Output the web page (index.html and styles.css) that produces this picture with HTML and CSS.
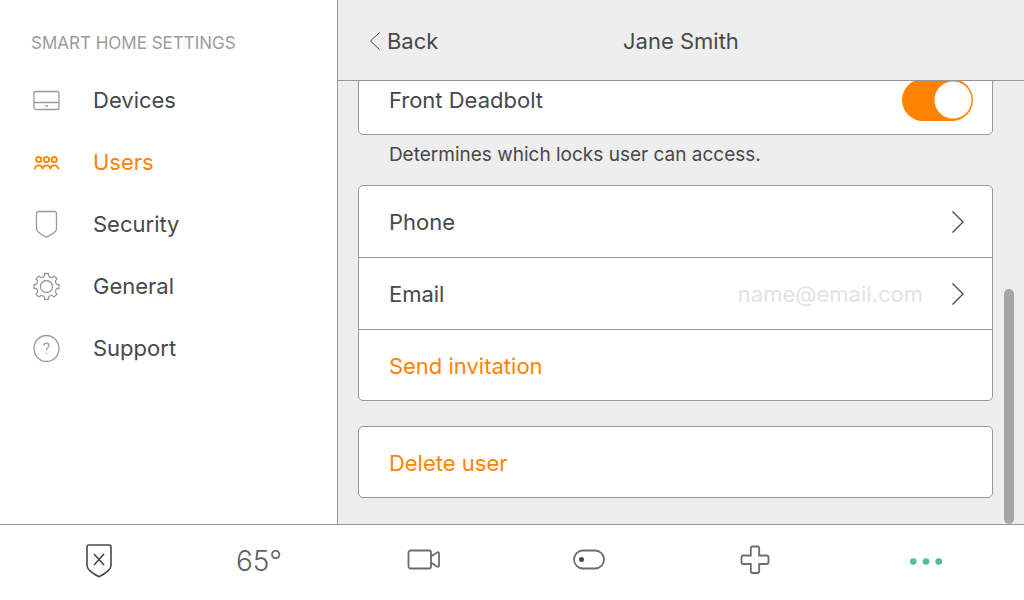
FILE: index.html
```html
<!DOCTYPE html>
<html lang="en">
<head>
<meta charset="utf-8">
<meta name="viewport" content="width=device-width, initial-scale=1">
<title>Smart Home Settings</title>
<link rel="stylesheet" href="styles.css">
</head>
<body>
<div class="app">
  <div class="main">
    <aside class="sidebar">
      <h2 class="sidebar-title">SMART HOME SETTINGS</h2>
      <nav class="menu">
        <a class="menu-item" href="#devices">
          <svg class="menu-icon" viewBox="0 0 28 28"><rect x="1" y="5.500" width="25" height="18" rx="2"/><path d="M1 16.500H26M12 20H15"/></svg>
          Devices
        </a>
        <a class="menu-item active" href="#users" aria-current="page">
          <svg class="menu-icon" viewBox="0 0 28 28"><circle cx="5.700" cy="11.500" r="2.600"/><circle cx="13.500" cy="11.500" r="2.600"/><circle cx="21.300" cy="11.500" r="2.600"/><path d="M1.500 21.300C2 18.500 3.500 17.300 5.700 17.300S9.100 18.500 9.600 21C10.100 18.500 11.400 17.300 13.500 17.300S16.900 18.500 17.400 21C17.900 18.500 19.200 17.300 21.300 17.300S25 18.500 25.500 21.300"/></svg>
          Users
        </a>
        <a class="menu-item" href="#security">
          <svg class="menu-icon" viewBox="0 0 28 28"><path d="M5.500 1.500H21.500Q23.500 1.500 23.500 3.500V18.500Q23.500 20.500 22 21.700Q18.500 25 13.500 27.200Q8.500 25 5 21.700Q3.500 20.500 3.500 18.500V3.500Q3.500 1.500 5.500 1.500Z"/></svg>
          Security
        </a>
        <a class="menu-item" href="#general">
          <svg class="menu-icon" viewBox="0.5 0 28 28"><circle cx="14" cy="14.500" r="6"/><path d="M12 1.500H16V3.500Q16 4.500 17.500 5.100Q19.300 5.900 20 5.300L21.600 4L24.500 6.900L23.200 8.500Q22.500 9.200 23.300 11Q23.900 12.500 25 12.500H26.500V16.500H25Q23.900 16.500 23.300 18Q22.500 19.800 23.200 20.500L24.500 22.100L21.600 25L20 23.700Q19.300 23.100 17.500 23.900Q16 24.500 16 25.500V27.500H12V25.500Q12 24.500 10.500 23.900Q8.700 23.100 8 23.700L6.400 25L3.500 22.100L4.800 20.500Q5.500 19.800 4.700 18Q4.100 16.500 3 16.500H1.500V12.500H3Q4.100 12.500 4.700 11Q5.500 9.200 4.800 8.500L3.500 6.900L6.400 4L8 5.300Q8.700 5.900 10.500 5.100Q12 4.500 12 3.500Z"/></svg>
          General
        </a>
        <a class="menu-item" href="#support">
          <svg class="menu-icon" viewBox="0 0 28 28"><ellipse cx="13.500" cy="14.500" rx="12.500" ry="13"/><path d="M11 11.500Q11 9.200 13.500 9.200T16 11.500Q16 12.800 14.700 13.700T13.500 16.200M13.500 18.700V20"/></svg>
          Support
        </a>
      </nav>
    </aside>
    <main class="pane">
      <header class="pane-header">
        <button class="back" type="button">
          <svg class="back-icon" viewBox="0 0 12 20"><path d="M10.500 1.500L1.500 10L10.500 18.500"/></svg>
          Back
        </button>
        <h1 class="pane-title">Jane Smith</h1>
      </header>
      <div class="pane-body">
        <section class="card">
          <label class="row toggle-row">
            <span class="row-label">Front Deadbolt</span>
            <input class="switch" type="checkbox" role="switch" checked>
          </label>
        </section>
        <p class="hint">Determines which locks user can access.</p>
        <section class="card">
          <button class="row" type="button">
            <span class="row-label">Phone</span>
            <svg class="chevron" viewBox="0 0 14 24"><path d="M1.500 1.500L12 12L1.500 22.500"/></svg>
          </button>
          <button class="row" type="button">
            <span class="row-label">Email</span>
            <span class="row-value">name@email.com</span>
            <svg class="chevron" viewBox="0 0 14 24"><path d="M1.500 1.500L12 12L1.500 22.500"/></svg>
          </button>
          <button class="row action" type="button">Send invitation</button>
        </section>
        <section class="card spaced">
          <button class="row action" type="button">Delete user</button>
        </section>
        <div class="scroll-thumb"></div>
      </div>
    </main>
  </div>
  <nav class="tabs">
    <button class="tab" type="button" aria-label="Alarm">
      <svg class="tab-icon" viewBox="0 0 34 36"><g stroke="#48484a" stroke-width="1.600"><path d="M7 3H27Q29 3 29 5V23Q29 26 26.500 28.300Q22.500 32 17 34.700Q11.500 32 7.500 28.300Q5 26 5 23V5Q5 3 7 3Z"/><path d="M12 12L22 23M22 12L12 23"/></g></svg>
    </button>
    <button class="tab temperature" type="button">65°</button>
    <button class="tab" type="button" aria-label="Cameras">
      <svg class="tab-icon" viewBox="0 0 34 36"><rect x="1.500" y="8.500" width="22.500" height="18" rx="2"/><path d="M24 14.500L30 10.500Q32 9.700 32 11.500V23.500Q32 25.300 30 24.500L24 20.500"/></svg>
    </button>
    <button class="tab" type="button" aria-label="Locks">
      <svg class="tab-icon" viewBox="0 0 34 36"><rect x="2" y="8.500" width="30" height="18" rx="9"/><circle cx="9.500" cy="17.500" r="2.500" fill="#48484a" stroke="none"/></svg>
    </button>
    <button class="tab" type="button" aria-label="Emergency">
      <svg class="tab-icon" viewBox="0 0 34 36"><path d="M14.800 4.500H19.200Q21.200 4.500 21.200 6.500V13.500H28.500Q30.500 13.500 30.500 15.500V20Q30.500 22 28.500 22H21.200V29Q21.200 31 19.200 31H14.800Q12.800 31 12.800 29V22H5.500Q3.500 22 3.500 20V15.500Q3.500 13.500 5.500 13.500H12.800V6.500Q12.800 4.500 14.800 4.500Z"/></svg>
    </button>
    <button class="tab" type="button" aria-label="More">
      <svg class="tab-icon" viewBox="0 0 34 36"><g fill="#52bd9a" stroke="none"><circle cx="4.300" cy="19.500" r="3.300"/><circle cx="17" cy="19.500" r="3.300"/><circle cx="29.700" cy="19.500" r="3.300"/></g></svg>
    </button>
  </nav>
</div>
</body>
</html>
```

FILE: styles.css
```css
* {
  box-sizing: border-box;
}

body {
  margin: 0;
  background: #fff;
  color: #48484a;
  font-family: Inter, "Liberation Sans", sans-serif;
  font-size: 22px;
  line-height: 28px;
}

button {
  margin: 0;
  padding: 0;
  border: 0;
  background: none;
  color: inherit;
  font: inherit;
  text-align: left;
  cursor: pointer;
}

svg {
  flex: none;
  fill: none;
  stroke: currentColor;
}

.app {
  display: flex;
  flex-direction: column;
  height: 100vh;
}

.main {
  display: flex;
  flex: 1;
  min-height: 0;
}

.sidebar {
  flex: 0 0 33%;
  padding-top: 33px;
  border-right: 1px solid #97979a;
}

.sidebar-title {
  margin: 0;
  padding: 0 31px 15px;
  color: #9b9b9b;
  font-size: 17px;
  font-weight: 400;
  line-height: 21px;
}

.menu {
  display: flex;
  flex-direction: column;
}

.menu-item {
  display: flex;
  align-items: center;
  gap: 32px;
  height: 62px;
  padding: 0 33px;
  color: inherit;
  text-decoration: none;
}

.menu-icon {
  width: 28px;
  height: 28px;
  color: #9b9b9b;
  stroke-width: 1.3;
}

.active,
.active .menu-icon {
  color: #ff8300;
}

.active .menu-icon {
  stroke-width: 1.8;
}

.pane {
  display: flex;
  flex: 1;
  flex-direction: column;
  min-width: 0;
  background: #eee;
}

.pane-header {
  display: grid;
  flex: none;
  grid-template-columns: 1fr auto 1fr;
  align-items: center;
  height: 81px;
  padding: 2px 31px 0;
  border-bottom: 1px solid #97979a;
}

.back {
  display: flex;
  align-items: center;
  gap: 6px;
}

.back-icon {
  width: 12px;
  height: 20px;
}

.pane-title {
  margin: 0;
  font-size: 22px;
  font-weight: 400;
}

.pane-body {
  position: relative;
  display: flex;
  flex: 1;
  flex-direction: column;
  justify-content: flex-end;
  min-height: 0;
  padding: 0 31px 26px 20px;
  overflow: hidden;
}

.card {
  flex: none;
  border: 1px solid #97979a;
  border-radius: 5px;
  background: #fff;
}

.spaced {
  margin-top: 25px;
}

.row {
  display: flex;
  align-items: center;
  width: 100%;
  height: 71px;
  padding: 0 27px 0 30px;
}

.row + .row {
  height: 72px;
  border-top: 1px solid #97979a;
}

.row:last-child {
  height: 71px;
}

.row:only-child {
  height: 70px;
}

.toggle-row:only-child {
  height: 68px;
}

.row-label {
  flex: 1;
}

.row-value {
  margin-right: 28px;
  color: #e3e3e3;
}

.action {
  padding-top: 2px;
  color: #ff8300;
}

.chevron {
  width: 14px;
  height: 24px;
  stroke-width: 1.3;
}

.switch {
  width: 71px;
  height: 42px;
  margin: 0 -8px 0 0;
  border-radius: 21px;
  appearance: none;
  background: radial-gradient(circle at 51px 21px, #fff 18px, #ff8300 19px);
}

.hint {
  flex: none;
  margin: 0;
  padding: 6px 31px 16px;
  font-size: 19px;
}

.scroll-thumb {
  position: absolute;
  top: 47%;
  right: 10px;
  bottom: 0;
  width: 10px;
  border-radius: 5px;
  background: #a6a6a6;
}

.tabs {
  display: grid;
  flex: none;
  grid-template-columns: 160fr 160fr 170fr 160fr 172fr 170fr;
  height: 76px;
  padding: 0 13px 6px 19px;
  border-top: 1px solid #97979a;
}

.tab {
  display: flex;
  align-items: center;
  justify-content: center;
}

.tab-icon {
  width: 34px;
  height: 36px;
  color: #6c6c6e;
  stroke-width: 1.8;
}

.temperature {
  padding-top: 2px;
  color: #606062;
  font-size: 28px;
  font-weight: 300;
}
```
